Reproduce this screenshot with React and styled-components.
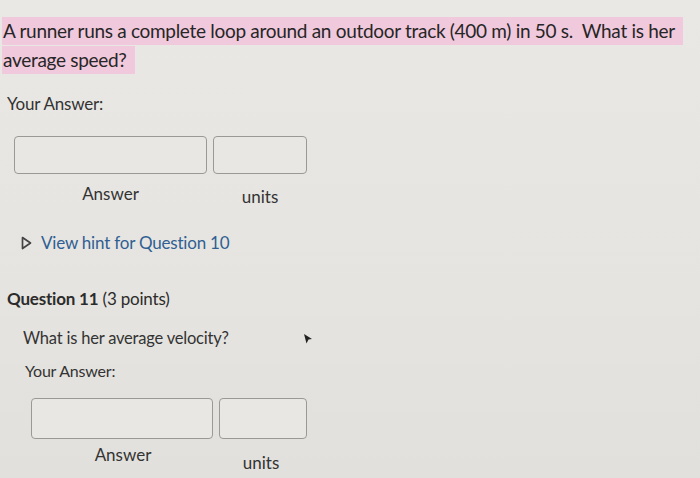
import styled, { createGlobalStyle } from "styled-components";

const Global = createGlobalStyle`
  html, body { margin: 0; padding: 0; }
  body {
    width: 700px;
    height: 478px;
    overflow: hidden;
    background: #e7e5e1;
    font-family: Lato, "Noto Sans", sans-serif;
    color: #2b2b2b;
  }
`;

const Page = styled.div`
  position: relative;
  width: 700px;
  height: 478px;
  background: linear-gradient(180deg, #eae8e5 0%, #e6e4e0 60%, #e2e0dc 100%);
  padding-top: 16px;
  box-sizing: border-box;
`;

const Prompt = styled.p`
  margin: 0 0 0 2px;
  font-size: 19px;
  letter-spacing: -0.3px;
  line-height: 29px;
  width: 694px;
  color: #262626;
`;

const Mark = styled.span`
  background: #f1c9dd;
  padding: 2px 8px 3px 1px;
  box-decoration-break: clone;
  -webkit-box-decoration-break: clone;
`;

const Label = styled.div`
  margin: ${(p) => p.$m};
  font-size: ${(p) => p.$size || 17}px;
  letter-spacing: -0.2px;
  color: #333;
`;

const Inputs = styled.div`
  display: flex;
  gap: 6px;
  margin: ${(p) => p.$m};
`;

const Field = styled.div`
  width: ${(p) => p.$w}px;
  height: ${(p) => p.$h || 38}px;
  border: 1.5px solid #9a9996;
  border-radius: 4px;
  background: #e9e7e3;
  box-sizing: border-box;
`;

const Captions = styled.div`
  display: flex;
  margin: ${(p) => p.$m};
  font-size: 17px;
  color: #333;
`;

const Caption = styled.span`
  width: ${(p) => p.$w}px;
  text-align: center;
  padding-top: ${(p) => p.$dy || 0}px;
`;

const Hint = styled.div`
  display: flex;
  align-items: center;
  gap: 9px;
  margin: 25px 0 0 21px;
  font-size: 17px;
  letter-spacing: -0.2px;
  color: #2f5f93;
`;

const Heading = styled.div`
  margin: 35px 0 0 7px;
  font-size: 17px;
  letter-spacing: -0.2px;
  color: #2b2b2b;
  b { font-weight: 700; }
`;

const Cursor = styled.svg`
  position: absolute;
  left: 303px;
  top: 333px;
`;

export default function App() {
  return (
    <Page>
      <Global />
      <Prompt>
        <Mark>
          A runner runs a complete loop around an outdoor track (400 m) in 50 s.&nbsp; What is her average speed?
        </Mark>
      </Prompt>
      <Label $m="19px 0 0 7px">Your Answer:</Label>
      <Inputs $m="22px 0 0 14px">
        <Field $w={193} />
        <Field $w={94} />
      </Inputs>
      <Captions $m="9px 0 0 14px">
        <Caption $w={193}>Answer</Caption>
        <Caption $w={106} $dy={3}>units</Caption>
      </Captions>
      <Hint>
        <svg width="11" height="14" viewBox="0 0 11 14">
          <path d="M1.5 1.5 L9.5 7 L1.5 12.5 Z" fill="none" stroke="#444" strokeWidth="1.7" strokeLinejoin="round" />
        </svg>
        View hint for Question 10
      </Hint>
      <Heading>
        <b>Question 11</b> (3 points)
      </Heading>
      <Label $m="19px 0 0 23px" $size={16.5}>What is her average velocity?</Label>
      <Label $m="13px 0 0 25px" $size={16}>Your Answer:</Label>
      <Inputs $m="18px 0 0 31px">
        <Field $w={182} $h={41} />
        <Field $w={88} $h={41} />
      </Inputs>
      <Captions $m="5px 0 0 31px">
        <Caption $w={184}>Answer</Caption>
        <Caption $w={92} $dy={8}>units</Caption>
      </Captions>
      <Cursor width="10" height="12" viewBox="0 0 10 12">
        <path d="M1 1 L9 6 L5.5 6.5 L3.5 10.5 Z" fill="#222" />
      </Cursor>
    </Page>
  );
}
